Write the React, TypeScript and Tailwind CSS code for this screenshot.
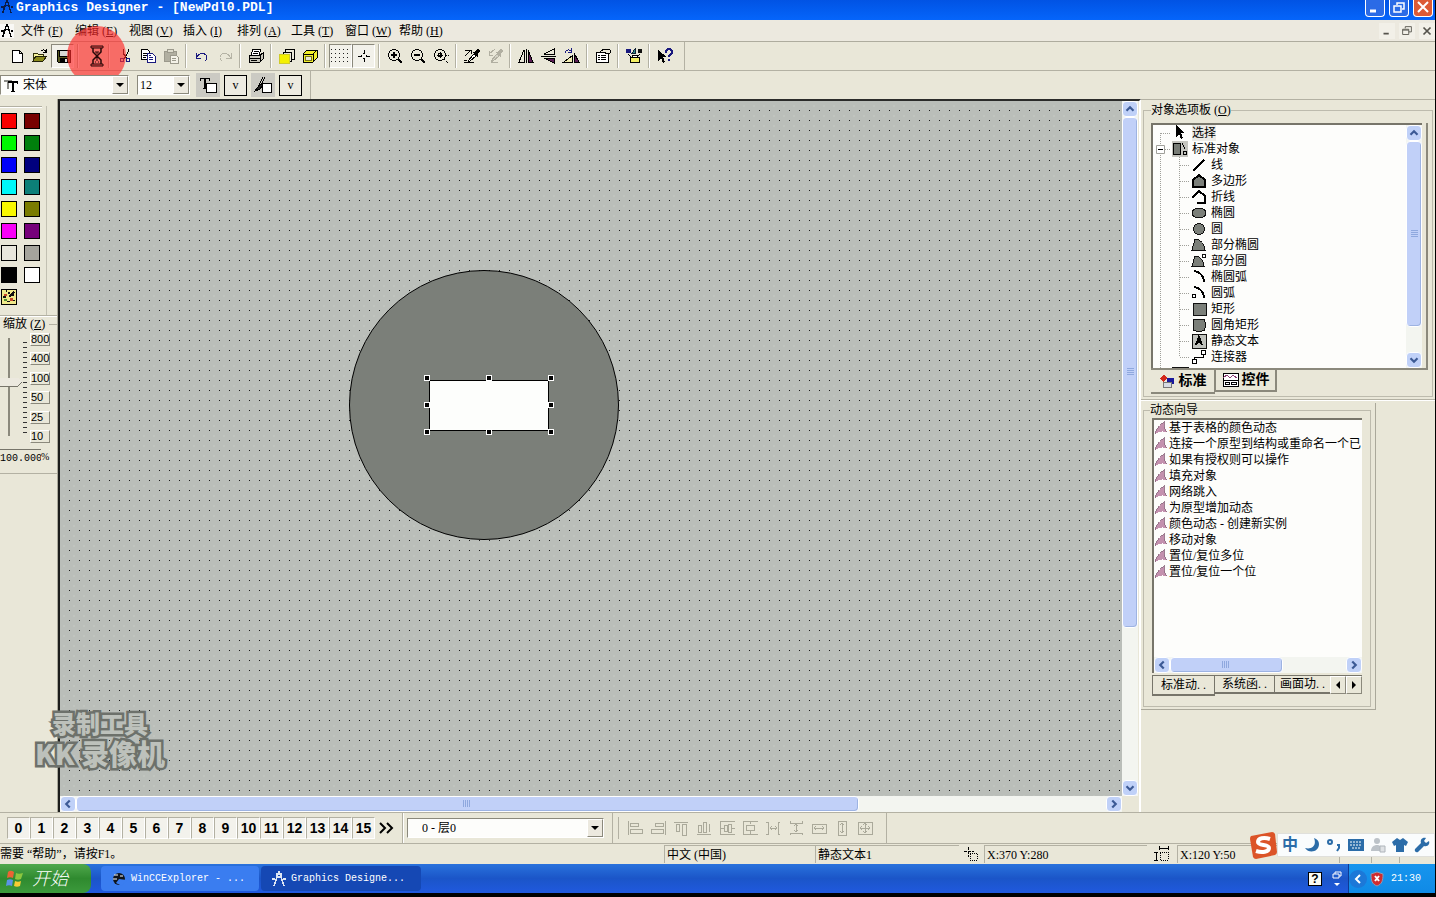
import { useState } from 'react';
import type { ReactNode } from 'react';
import clsx from 'clsx';

const SUNKEN = 'border border-t-[#8b897c] border-l-[#8b897c] border-b-white border-r-white';
const RAISED = 'border border-t-white border-l-white border-b-[#8b897c] border-r-[#8b897c]';

const ICONS: Record<string, ReactNode> = {
  new: <path d="M3 2h7l3 3v9H3zM10 2v3h3" fill="#fff" stroke="#000" />,
  open: (
    <>
      <path d="M1 13V5h4l1 1h5v2" fill="#f4f29a" stroke="#33320c" />
      <path d="M1 13l3-5h11l-4 5z" fill="#8a8a1c" stroke="#22220a" />
      <path d="M9 3c2-2 4-1 5 1M14 1v3h-3" fill="none" stroke="#000" />
    </>
  ),
  save: (
    <>
      <path d="M2 2h13v12H3l-1-1z" fill="#55571f" stroke="#000" />
      <path d="M4 2h9v6H4z" fill="#d9d9d5" stroke="#000" />
      <path d="M5 10h8v4H5z" fill="#000" />
      <path d="M10 11h2v3h-2z" fill="#ddd" />
    </>
  ),
  hourglass: (
    <>
      <path d="M2 1h12v2H2zM2 19h12v2H2z" fill="#e84848" stroke="#260808" />
      <path d="M4 3v4l4 4-4 4v4M12 3v4l-4 4 4 4v4" fill="none" stroke="#260808" strokeWidth="1.500" />
      <path d="M6 7h4M7 8h2M8 12v3M6 17h1M9 17h1M8 15v1" fill="none" stroke="#260808" />
    </>
  ),
  cut: (
    <>
      <path d="M6 1v4l4 6M11 1v3L7 11" fill="none" stroke="#000" />
      <circle cx="5" cy="12" r="2" fill="none" stroke="#19197e" />
      <circle cx="11" cy="12" r="2" fill="none" stroke="#19197e" />
    </>
  ),
  copy: (
    <>
      <path d="M1 1h6l2 2v8H1z" fill="#fff" stroke="#000" />
      <path d="M3 5h4M3 7h4M3 9h3" stroke="#000" />
      <path d="M7 5h5l3 3v6H7z" fill="#fff" stroke="#19197e" />
      <path d="M9 9h4M9 11h4M9 7h2" stroke="#19197e" />
    </>
  ),
  paste: (
    <>
      <path d="M1 3h12v10H1z" fill="#b1afa1" stroke="#9b998c" />
      <path d="M4 1h6v3H4z" fill="#dddbcd" stroke="#9b998c" />
      <path d="M7 7h6l2 2v6H7z" fill="#f4f2e8" stroke="#9b998c" />
      <path d="M9 10h4M9 12h4" stroke="#9b998c" />
    </>
  ),
  undo: <path d="M2 5v5h5M2 10c3-5 7-6 10-3 2 2 1 5-1 6" fill="none" stroke="#19197e" />,
  redo: <path d="M14 5v5H9M14 10C11 5 7 4 4 7c-2 2-1 5 1 6" fill="none" stroke="#b5b3a5" />,
  print: (
    <>
      <path d="M5 1h8l-2 6H3z" fill="#fff" stroke="#000" />
      <path d="M6 3h5M5 5h5" stroke="#000" />
      <path d="M1 7h11l3-2v6l-3 3H1z" fill="#c9c8bc" stroke="#000" />
      <path d="M1 10h11M12 7v7M3 12h6" stroke="#000" />
    </>
  ),
  layers: (
    <>
      <path d="M6 1h9v10h-3V4H6z" fill="#e9e7d8" stroke="#000" />
      <path d="M4 4h8v9h-2V6H4z" fill="#e9e7d8" stroke="#000" />
      <path d="M0 6h10v9H0z" fill="#f4f000" stroke="#cfcb2a" />
    </>
  ),
  cube: (
    <>
      <path d="M1 6l4-4h10v8l-4 4H1z" fill="#f1ee2b" stroke="#000" />
      <path d="M1 6h10v8M11 6l4-4" fill="none" stroke="#000" />
      <path d="M3 8h6v4H3z" fill="#e8e6d8" stroke="#77761a" />
    </>
  ),
  grid: (
    <path d="M-2 1h19M-2 5h19M-2 9h19M-2 13h19" fill="none" stroke="#222" strokeDasharray="1 3" />
  ),
  snap: (
    <path
      d="M8 2v4M8 10v4M2 8h4M10 8h4M7 5l1 1 1-1M7 11l1-1 1 1M5 7l1 1-1 1M11 7l-1 1 1 1"
      fill="none"
      stroke="#000"
    />
  ),
  zoomIn: (
    <>
      <circle cx="7" cy="7" r="5.500" fill="none" stroke="#000" />
      <path d="M4 7h6M7 4v6" stroke="#000" strokeWidth="2" />
      <path d="M11 11l4 4" stroke="#000" strokeWidth="2" />
    </>
  ),
  zoomOut: (
    <>
      <circle cx="7" cy="7" r="5.500" fill="none" stroke="#000" />
      <path d="M4 7h6" stroke="#000" strokeWidth="2" />
      <path d="M11 11l4 4" stroke="#000" strokeWidth="2" />
    </>
  ),
  zoomArea: (
    <>
      <circle cx="7" cy="7" r="5.500" fill="none" stroke="#000" />
      <path d="M4 7h6M7 4v6" stroke="#000" />
      <circle cx="7" cy="7" r="2" fill="none" stroke="#000" />
      <path d="M11 11l4 4M12 7h4" stroke="#000" strokeDasharray="2 1" />
    </>
  ),
  picker: (
    <>
      <path d="M4 13l6-7 2 2-7 6z" fill="#fff" stroke="#000" />
      <path d="M9 4l2 0 3-3 2 2-3 3v2z" fill="#000" stroke="#000" />
      <path d="M1 2h6v4M1 8l6-6M0 14h10M0 12h3" stroke="#000" fill="none" />
    </>
  ),
  pickerOff: (
    <>
      <path d="M4 13l6-7 2 2-7 6z" fill="#d5d3c6" stroke="#b1afa1" />
      <path d="M9 4l2 0 3-3 2 2-3 3v2z" fill="#b1afa1" stroke="#b1afa1" />
      <path d="M8 1L2 6M2 3v4h4M4 14h7M4 12h3" stroke="#b1afa1" fill="none" />
    </>
  ),
  mirrorH: (
    <>
      <path d="M6 2v12H1z" fill="#e9e7d8" stroke="#000" />
      <path d="M8 1v14" stroke="#000" />
      <path d="M10 2v12h5z" fill="#5b1d55" stroke="#000" />
    </>
  ),
  mirrorV: (
    <>
      <path d="M13 1v5H3z" fill="#e9e7d8" stroke="#000" />
      <path d="M0 8h15" stroke="#000" />
      <path d="M13 15v-5H3z" fill="#5b1d55" stroke="#000" />
    </>
  ),
  rotate: (
    <>
      <path d="M8 8v6H0z" fill="#f1ecb0" stroke="#000" />
      <path d="M10 5v9h5z" fill="#5b1d55" stroke="#000" />
      <path d="M1 5c1-3 4-4 6-2M7 0v4H4" fill="none" stroke="#19197e" />
    </>
  ),
  props: (
    <>
      <path d="M1 4h12v10H1z" fill="#fff" stroke="#000" />
      <path d="M3 7h2M6 7h5M3 9h2M6 9h5M3 11h2M6 11h5" stroke="#000" />
      <path d="M5 4l4-3 6 1v3l-3 1-3-2" fill="#e9e7d8" stroke="#000" />
    </>
  ),
  library: (
    <>
      <circle cx="2.500" cy="3" r="2.500" fill="#19197e" />
      <path d="M9 1v4H6z" fill="#2f8d8d" stroke="#123" />
      <path d="M12 1h4v4h-4z" fill="#111" />
      <path d="M2 6l3 3M14 6l-3 3" stroke="#000" />
      <path d="M4 9h9v5H4z" fill="#f4f064" stroke="#000" />
      <path d="M6 7h5v2H6z" fill="#fff" stroke="#000" />
    </>
  ),
  help: (
    <>
      <path d="M1 2v11l3-3 2 5 2-1-2-5h4z" fill="#000" />
      <path d="M9 5c0-5 6-5 6-1 0 3-3 2-3 5M12 11v2" fill="none" stroke="#19197e" strokeWidth="2" />
    </>
  ),
  compass: (
    <path
      d="M8 0v3M6 3h4v3H6zM6 6L3 15M10 6l3 9M1 8h3M12 8h3"
      fill="none"
      stroke="currentColor"
      strokeWidth="1.500"
    />
  ),
  textColor: (
    <>
      <path d="M0 1h10v3H9V2H6v9h1v1H3v-1h1V2H1v2H0z" fill="#000" />
      <path d="M6 6h10v9H6z" fill="#fff" stroke="#000" />
    </>
  ),
  brush: (
    <>
      <path d="M8 0L4 8M10 0L6 8M5 7l-5 7 5-2 3-4z" fill="#222" stroke="#000" />
      <path d="M7 6h9v9H7z" fill="#fff" stroke="#000" />
    </>
  ),
  cursor: <path d="M4 0v12l3-3 2 5 2-1-2-5h4z" fill="#000" />,
  objects: (
    <>
      <path d="M0 0h16v16H0z" fill="#c4c4be" />
      <path d="M1 2h7v11H1z" fill="#777b75" stroke="#000" />
      <path d="M10 2l3 6" stroke="#000" />
      <circle cx="13" cy="12" r="2" fill="none" stroke="#000" />
    </>
  ),
  line: <path d="M2 14L13 3" stroke="#000" strokeWidth="2" />,
  polygon: <path d="M2 7l6-5 6 5v7H2z" fill="#7b7f79" stroke="#000" strokeWidth="2" />,
  polyline: <path d="M1 9l7-7 6 5v7H6" fill="none" stroke="#000" strokeWidth="2" />,
  ellipse: <ellipse cx="8" cy="8" rx="7" ry="5" fill="#7b7f79" stroke="#111" />,
  circle: <circle cx="8" cy="8" r="5.500" fill="#7b7f79" stroke="#111" />,
  ellipseSegment: <path d="M1 13L4 2c5 0 9 4 10 11z" fill="#7b7f79" stroke="#111" />,
  circleSegment: (
    <>
      <path d="M1 13L4 3c5 0 8 4 9 10z" fill="#7b7f79" stroke="#111" />
      <circle cx="13" cy="3" r="2" fill="#fff" stroke="#111" />
    </>
  ),
  ellipseArc: <path d="M3 2c6 1 10 5 10 11" fill="none" stroke="#000" strokeWidth="2" />,
  circleArc: (
    <>
      <path d="M3 2c6 1 10 5 10 11" fill="none" stroke="#000" strokeWidth="2" />
      <circle cx="3" cy="11" r="2" fill="#fff" stroke="#000" />
    </>
  ),
  rect: <path d="M2 2h13v12H2z" fill="#7b7f79" stroke="#111" />,
  roundRect: <rect x="2" y="2" width="12" height="12" rx="3" fill="#7b7f79" stroke="#111" />,
  staticText: (
    <>
      <path d="M1 1h14v14H1z" fill="#c0c2bd" stroke="#111" />
      <path d="M5 12l3-8 3 8M6 9h4" fill="none" stroke="#000" strokeWidth="2" />
    </>
  ),
  connector: (
    <>
      <path d="M3 10V8h9V5" fill="none" stroke="#000" />
      <path d="M10 1h4v4h-4zM1 10h4v4H1z" fill="#fff" stroke="#000" />
    </>
  ),
  smartObject: <path d="M0 2h16v12H0z" fill="#c4c4be" stroke="#111" />,
  wizard: (
    <>
      <path d="M1 15C2 9 7 4 12 1c-1 5 0 8 3 12-5-2-10-1-14 2z" fill="#c391ae" />
      <path d="M12 1c-1 5 0 8 3 12M1 15C2 9 7 4 12 1" fill="none" stroke="#8d6a80" />
    </>
  ),
  tabStandard: (
    <>
      <path d="M1 5l4-3 3 3-4 4z" fill="#d22a1c" />
      <path d="M8 5h7v6H8z" fill="#19199c" />
      <path d="M4 9h8v5H4z" fill="#d7dbe4" stroke="#777" />
    </>
  ),
  tabControls: (
    <>
      <path d="M1 1h15v13H1zM1 8h15" fill="#fff" stroke="#000" />
      <path d="M1 6l4-3 3 3 3-3 4 3" fill="none" stroke="#8a3a72" />
      <path d="M3 10h4v2H3zM9 10h5v2H9z" fill="none" stroke="#000" />
    </>
  ),
  palette: (
    <>
      <path d="M0 0h16v16H0z" fill="#efe98a" />
      <path d="M2 4h4v3H2zM9 9h3v4H9z" fill="#c4452b" />
      <path d="M2 10h4v3H2z" fill="#4f8d30" />
      <path d="M8 8l6-6M7 3h2M11 6h3M6 13h3M1 8h3M4 1h2M13 12h2" stroke="#111" strokeWidth="2" />
    </>
  ),
  position: (
    <>
      <path d="M4 1v10M0 5h10" stroke="#000" strokeDasharray="3 1" fill="none" />
      <path d="M6 7h7v7H6z" fill="none" stroke="#000" strokeDasharray="1 1" />
    </>
  ),
  extent: (
    <>
      <path d="M5 2h9M2 6v8M5 0v4M14 0v4M0 6h4M0 14h4" stroke="#000" fill="none" />
      <path d="M6 6h8v8H6z" fill="none" stroke="#000" strokeDasharray="1 1" />
    </>
  ),
  alignLeft: <path d="M1 1v14M3 3h8v3H3zM3 9h12v4H3z" />,
  alignRight: <path d="M15 1v14M13 3H5v3h8zM13 9H1v4h12z" />,
  alignTop: <path d="M1 2h14M3 4h3v7H3zM9 4h4v11H9z" />,
  alignBottom: <path d="M1 14h14M2 5h3v7H2zM7 2h3v10H7zM13 4v8" />,
  centerH: <path d="M1 1h15v13H1zM1 8h4M12 8h4M5 5h3v6H5zM9 4h3v8H9z" />,
  centerV: <path d="M1 1h15v13H1zM8 1v3M8 11v3M4 5h8v5H4z" />,
  spaceH: <path d="M1 2h2v12H1M15 2h-2v12h2M5 8h7M7 6L5 8l2 2M10 6l2 2-2 2" />,
  spaceV: <path d="M2 1v2h12V1M2 15v-2h12v2M8 4v8M6 6l2-2 2 2M6 10l2 2 2-2" />,
  sameWidth: <path d="M1 4h14v9H1zM3 8h10M5 6L3 8l2 2M11 6l2 2-2 2" />,
  sameHeight: <path d="M4 1h8v14H4zM8 3v10M6 5l2-2 2 2M6 11l2 2 2-2" />,
  sameSize: <path d="M1 2h14v12H1zM3 8h10M8 3v10M5 6L3 8l2 2M11 6l2 2-2 2M6 5l2-2 2 2M6 11l2 2 2-2" />,
};

const Icon = ({ name, className = 'size-4' }: { name: string; className?: string }) => (
  <svg
    viewBox="0 0 16 16"
    shapeRendering="crispEdges"
    className={clsx('shrink-0 overflow-visible', className)}
    aria-hidden="true"
  >
    {ICONS[name]}
  </svg>
);

const Chevron = ({ dir }: { dir: 'up' | 'down' | 'left' | 'right' }) => {
  const paths = {
    up: 'M4 10l4-4 4 4',
    down: 'M4 6l4 4 4-4',
    left: 'M10 4L6 8l4 4',
    right: 'M6 4l4 4-4 4',
  };
  return (
    <svg viewBox="0 0 16 16" className="size-4" aria-hidden="true">
      <path d={paths[dir]} fill="none" stroke="#3c5a95" strokeWidth="2.500" />
    </svg>
  );
};

const SCROLL_BUTTON =
  'flex size-4 shrink-0 items-center justify-center rounded-sm border border-white bg-[#c0d1f8]';

const ScrollBar = ({ vertical = false, size }: { vertical?: boolean; size: number }) => (
  <div className={clsx('flex shrink-0 bg-[#f3f5f0]', vertical ? 'w-4 flex-col' : 'h-4 w-full')}>
    <button className={SCROLL_BUTTON} aria-label={vertical ? '向上滚动' : '向左滚动'}>
      <Chevron dir={vertical ? 'up' : 'left'} />
    </button>
    <div className="min-h-0 min-w-0 flex-1">
      <div
        className={clsx(
          'flex items-center justify-center rounded-sm border border-white bg-[#c1d0f8] shadow-[inset_-1px_-1px_0_#9db3e2]',
          vertical ? 'w-full' : 'h-full',
        )}
        style={vertical ? { height: `${size}%` } : { width: `${size}%` }}
      >
        <svg
          viewBox="0 0 8 8"
          shapeRendering="crispEdges"
          className={clsx('size-2', vertical && 'rotate-90')}
          aria-hidden="true"
        >
          <path d="M0.500 0v7M2.500 0v7M4.500 0v7M6.500 0v7" stroke="#8fa8de" />
        </svg>
      </div>
    </div>
    <button className={SCROLL_BUTTON} aria-label={vertical ? '向下滚动' : '向右滚动'}>
      <Chevron dir={vertical ? 'down' : 'right'} />
    </button>
  </div>
);

const Separator = () => (
  <div className="flex h-full w-2 shrink-0 justify-center">
    <div className="h-full w-0.5 border-l border-[#b3b1a3] bg-white" />
  </div>
);

const TitleBar = () => (
  <header className="flex h-5 shrink-0 items-start bg-linear-to-b from-[#0153e4] to-[#0565fb] text-white">
    <Icon name="compass" className="size-3.5 text-[#0a1c48]" />
    <h1 className="ml-0.5 flex-1 font-[Liberation_Mono,monospace] text-[13px] leading-[15px] font-bold">
      Graphics Designer - [NewPdl0.PDL]
    </h1>
    <div className="flex gap-1 pr-0.5">
      {['最小化', '还原', '关闭'].map((label, i) => (
        <button
          key={label}
          aria-label={label}
          className={clsx(
            'flex h-[17px] w-5 items-center justify-center rounded-b-sm border border-t-0 border-white',
            i === 2 ? 'bg-[#dc5a36]' : 'bg-[#2b6be6]',
          )}
        >
          <svg viewBox="0 0 16 16" className="size-4" fill="none" stroke="#fff" strokeWidth="2" aria-hidden="true">
            {i === 0 && <path d="M3 11h6" strokeWidth="3" />}
            {i === 1 && <path d="M6 5V3h7v6h-2M3 6h7v6H3z" strokeWidth="1.500" />}
            {i === 2 && <path d="M3 2l10 10M13 2L3 12" />}
          </svg>
        </button>
      ))}
    </div>
  </header>
);

const MENUS = [
  ['文件', 'F'],
  ['编辑', 'E'],
  ['视图', 'V'],
  ['插入', 'I'],
  ['排列', 'A'],
  ['工具', 'T'],
  ['窗口', 'W'],
  ['帮助', 'H'],
];

const MenuBar = () => (
  <nav className="flex h-[22px] shrink-0 items-center border-b border-[#aeac9e] bg-[#ece9df]">
    <div className="flex w-[21px] items-center">
      <Icon name="compass" className="size-3.5 bg-[#f9f8f5] text-black" />
    </div>
    {MENUS.map(([label, key]) => (
      <button key={key} className="w-[54px] text-left whitespace-nowrap">
        {label} (<u>{key}</u>)
      </button>
    ))}
    <div className="ml-auto flex gap-1">
      {['M4 11h6', 'M6 5V3h7v6h-3M3 6h7v6H3zM3 7h7', 'M4 4l8 8M12 4l-8 8'].map((d, i) => (
        <button
          key={d}
          aria-label={['最小化文档', '还原文档', '关闭文档'][i]}
          className="flex size-4 items-center justify-center bg-[#f2f0e8]"
        >
          <svg viewBox="0 0 16 16" className="size-3.5" fill="none" stroke="#55534c" aria-hidden="true">
            <path d={d} strokeWidth={i === 1 ? 1 : 2} />
          </svg>
        </button>
      ))}
    </div>
  </nav>
);

const TOOLS = [
  ['new', 'open', 'save'],
  ['hourglass'],
  ['cut', 'copy', 'paste'],
  ['undo', 'redo'],
  ['print'],
  ['layers', 'cube'],
  ['grid', 'snap'],
  ['zoomIn', 'zoomOut', 'zoomArea'],
  ['picker', 'pickerOff'],
  ['mirrorH', 'mirrorV', 'rotate'],
  ['props'],
  ['library'],
  ['help'],
];
const PRESSED = ['save', 'grid', 'snap'];

const Toolbar = () => (
  <div className="relative flex h-[29px] shrink-0 border-b border-[#b3b1a3]">
    <div className="flex border-r border-[#b3b1a3] py-0.5 pr-2 pl-[5px]">
      {TOOLS.map((group, i) => (
        <div key={group[0]} className="flex items-center">
          {i > 0 && <Separator />}
          {group.map((name) => (
            <button
              key={name}
              aria-label={name}
              className={clsx(
                'flex h-6 w-[23px] items-center justify-center',
                PRESSED.includes(name) && ['bg-[#f2f1ea]', SUNKEN],
              )}
            >
              {name !== 'hourglass' && <Icon name={name} />}
            </button>
          ))}
        </div>
      ))}
    </div>
    {/* click highlight over the busy cursor */}
    <div className="pointer-events-none absolute -top-4 left-[67px] flex size-[59px] items-center justify-center rounded-full bg-[#ff2a2a]/65">
      <svg viewBox="0 0 16 22" className="h-[22px] w-4" aria-hidden="true">
        {ICONS.hourglass}
      </svg>
    </div>
  </div>
);

const Combo = ({
  label,
  value,
  options,
  className,
  selectClass,
}: {
  label: string;
  value: string;
  options: string[];
  className: string;
  selectClass?: string;
}) => {
  const [current, setCurrent] = useState(value);
  return (
    <div className={clsx('relative flex items-center bg-[#fdfdfb]', SUNKEN, className)}>
      <select
        aria-label={label}
        value={current}
        onChange={(e) => setCurrent(e.target.value)}
        className={clsx('h-full w-full appearance-none bg-transparent outline-none', selectClass)}
      >
        {options.map((o) => (
          <option key={o}>{o}</option>
        ))}
      </select>
      <span
        className={clsx(
          'pointer-events-none absolute right-0 flex h-full w-4 items-center justify-center bg-[#ece9df]',
          RAISED,
        )}
      >
        <svg viewBox="0 0 8 4" className="h-1 w-2" aria-hidden="true">
          <path d="M0 0h8L4 4z" />
        </svg>
      </span>
    </div>
  );
};

const FormatBar = () => (
  <div className="flex h-7 shrink-0">
    <div className="flex items-center border-r border-[#b3b1a3] pr-2">
      <div className="relative">
        <Combo label="字体" value="宋体" options={['宋体', '黑体']} className="h-5 w-[129px]" selectClass="pl-[22px]" />
        <svg viewBox="0 0 16 16" className="absolute top-0.5 left-1 size-4" aria-hidden="true">
          <path d="M0 3h8v2H5v7H3V5H0z" fill="#8b8b86" />
          <path d="M4 6V4h10v3h-1V6h-3v8h1v1H7v-1h1V6H5z" />
        </svg>
      </div>
      <Combo label="字号" value="12" options={['10', '12', '14']} className="ml-2 h-5 w-[53px]" selectClass="pl-0.5" />
      <div className="ml-1.5 flex items-center gap-1">
        {['textColor', 'brush'].map((name) => (
          <div key={name} className="flex items-center gap-1">
            <button aria-label={name} className="flex size-6 items-center justify-center bg-[#cbcac3]">
              <Icon name={name} />
            </button>
            <button className="h-[21px] w-[23px] border border-black bg-[#edebe1] text-xs leading-4">v</button>
          </div>
        ))}
      </div>
    </div>
  </div>
);

const SWATCHES = [
  '#f80000', '#780000', '#00f800', '#007f0c', '#0000f8', '#00007e', '#00f8f8', '#0c7f78',
  '#f8f800', '#7a7c00', '#f800f8', '#76007a', '#e8e6dc', '#a5a49c', '#000000', '#ffffff',
];

const SidePanel = () => (
  <aside className="flex w-[58px] shrink-0 flex-col overflow-hidden border-r border-[#aaa89a]">
    <div className="mt-[7px] mr-2.5 h-[209px] border-r border-[#c2c0b2]">
      <div className="mr-1 h-0.5 border-t border-[#b3b1a3] bg-white" />
      <div className="mt-[5px] ml-px grid w-10 grid-cols-[16px_16px] gap-x-[7px] gap-y-1.5">
        {SWATCHES.map((color) => (
          <button
            key={color}
            aria-label={color}
            className="size-4 border border-black"
            style={{ backgroundColor: color }}
          />
        ))}
        <button aria-label="调色板" className="size-4 border border-black">
          <Icon name="palette" className="size-3.5" />
        </button>
      </div>
    </div>
    <div className="h-0.5 border-t border-[#b3b1a3] bg-white" />
    <section className="border-b border-[#b3b1a3]">
      <div className="flex h-3.5 items-center pl-[3px] whitespace-nowrap">
        <label htmlFor="zoom">
          缩放 (<u>Z</u>)
        </label>
        <span className="ml-1 h-px flex-1 bg-[#b3b1a3]" />
      </div>
      <div className="flex h-[112px]">
        <div className="relative h-full w-[30px]">
          <svg viewBox="0 0 30 112" shapeRendering="crispEdges" className="h-full w-full" aria-hidden="true">
            <path d="M9 7v98" stroke="#8b897c" strokeWidth="2" />
            <path d="M0 47h18l4 4-4 4H0z" fill="#ece9df" />
            <path d="M0 55h18l4-4" fill="none" stroke="#77756a" />
            <path d="M25 11v92" stroke="#333" strokeWidth="4" strokeDasharray="1 4" />
          </svg>
          <input
            id="zoom"
            type="range"
            min={10}
            max={800}
            defaultValue={100}
            className="absolute inset-0 h-full w-full opacity-0"
          />
        </div>
        <div className="flex flex-col justify-between pt-0.5">
          {[800, 400, 100, 50, 25, 10].map((n) => (
            <button
              key={n}
              className={clsx('h-[13px] w-5 text-left font-[Liberation_Sans,sans-serif] text-[11px] leading-[11px]', RAISED)}
            >
              {n}
            </button>
          ))}
        </div>
      </div>
      <div className="mt-1.5 flex h-6 items-start">
        <input
          aria-label="缩放比例"
          defaultValue="100.000"
          className="h-[18px] w-[41px] border-t border-[#77756a] bg-transparent font-[Liberation_Mono,monospace] text-[10px] outline-none"
        />
        <span className="text-[10px] leading-4">%</span>
      </div>
    </section>
  </aside>
);

const HANDLES = [
  [367, 277], [429, 277], [491, 277], [367, 304],
  [491, 304], [367, 331], [429, 331], [491, 331],
];

const Canvas = () => (
  <main className="flex min-w-0 flex-1 border-t-2 border-r-2 border-l-2 border-t-[#2b2c2a] border-r-white border-l-[#1c1d1c]">
    <div className="flex min-w-0 flex-1 flex-col">
      <div className="min-h-0 flex-1 overflow-hidden bg-[#babeb9]">
        <svg className="block h-full w-full" role="img" aria-label="NewPdl0.PDL">
          <defs>
            <pattern id="dots" width="10" height="10" patternUnits="userSpaceOnUse">
              <rect x="9" y="9" width="1" height="1" fill="#1c1d1c" />
              <rect x="3" y="4" width="2" height="2" fill="#c0c4be" />
            </pattern>
          </defs>
          <rect width="100%" height="100%" fill="url(#dots)" />
          <circle cx="424" cy="304" r="134.500" fill="#7b7f79" stroke="#000" />
          <rect x="369.500" y="279.500" width="119" height="50" fill="#fdfefc" stroke="#000" />
          {HANDLES.map(([x, y]) => (
            <rect key={`${x}-${y}`} x={x - 2.5} y={y - 2.5} width="5" height="5" fill="#000" stroke="#fff" />
          ))}
        </svg>
      </div>
      <ScrollBar size={76} />
    </div>
    <div className="flex w-[17px] flex-col">
      <div className="flex min-h-0 flex-1">
        <ScrollBar vertical size={77} />
      </div>
      <div className="h-4" />
    </div>
  </main>
);

const TREE = [
  ['line', '线'],
  ['polygon', '多边形'],
  ['polyline', '折线'],
  ['ellipse', '椭圆'],
  ['circle', '圆'],
  ['ellipseSegment', '部分椭圆'],
  ['circleSegment', '部分圆'],
  ['ellipseArc', '椭圆弧'],
  ['circleArc', '圆弧'],
  ['rect', '矩形'],
  ['roundRect', '圆角矩形'],
  ['staticText', '静态文本'],
  ['connector', '连接器'],
];

const Branch = ({ d, box = false }: { d: string; box?: boolean }) => (
  <svg viewBox="0 0 19 16" className="h-4 w-[19px] shrink-0" fill="none" aria-hidden="true">
    <path d={d} stroke="#a0a09a" strokeDasharray="1 1" />
    {box && (
      <>
        <path d="M3.500 4.500h8v8h-8z" fill="#fff" stroke="#a0a09a" />
        <path d="M5 8.500h5" stroke="#000" />
      </>
    )}
  </svg>
);

const ObjectPalette = () => (
  <fieldset className="mr-0.5 ml-0.5 min-w-0 border border-[#bdbbad] pr-1 pb-0.5 pl-[7px]">
    <legend className="h-3.5 leading-3.5">
      对象选项板 (<u>O</u>)
    </legend>
    <div className="mt-1.5 border-r-2 border-b-2 border-[#8b897c] pr-1">
      <div className="flex h-[245px] overflow-hidden border-t-2 border-l-2 border-[#77756a] bg-[#fdfdfb]">
        <ul className="min-w-0 flex-1">
          <li className="flex h-4 items-center">
            <Branch d="M7.500 8v8M8 8.500h10" />
            <Icon name="cursor" />
            <span className="ml-1 bg-[#ecebe6]">选择</span>
          </li>
          <li className="flex h-4 items-center">
            <Branch d="M7.500 0v16M8 8.500h10" box />
            <Icon name="objects" />
            <span className="ml-1">标准对象</span>
          </li>
          {TREE.map(([icon, label], i) => (
            <li key={icon} className="flex h-4 items-center">
              <Branch d="M7.500 0v16" />
              <Branch d={i === TREE.length - 1 ? 'M7.500 0v8M8 8.500h10' : 'M7.500 0v16M8 8.500h10'} />
              <Icon name={icon} />
              <span className="ml-1">{label}</span>
            </li>
          ))}
          <li className="flex h-4 items-center">
            <Branch d="M7.500 0v8" />
            <Icon name="smartObject" />
          </li>
        </ul>
        <ScrollBar vertical size={88} />
      </div>
    </div>
    <div role="tablist" className="flex items-start text-sm leading-4 font-bold">
      <button role="tab" aria-selected="true" className="flex h-6 w-16 items-center justify-center gap-1 border-r border-b-2 border-[#8b897c]">
        <Icon name="tabStandard" />
        标准
      </button>
      <button role="tab" aria-selected="false" className="flex h-[22px] w-[62px] items-center justify-center gap-1 border-r-2 border-b-2 border-l border-[#8b897c]">
        <Icon name="tabControls" />
        控件
      </button>
    </div>
  </fieldset>
);

const WIZARDS = [
  '基于表格的颜色动态',
  '连接一个原型到结构或重命名一个已',
  '如果有授权则可以操作',
  '填充对象',
  '网络跳入',
  '为原型增加动态',
  '颜色动态 - 创建新实例',
  '移动对象',
  '置位/复位多位',
  '置位/复位一个位',
];

const DynamicWizard = () => (
  <div className="w-[235px] border-r border-b border-[#aaa89a] pb-0.5">
    <fieldset className="mr-1 ml-0.5 min-w-0 border border-[#bdbbad] px-2 pb-2.5">
      <legend className="-ml-0.5 h-3.5 leading-3.5">动态向导</legend>
      <div className="mt-px border-t-2 border-l-2 border-[#77756a] bg-[#fdfdfb]">
        <ul className="h-[237px]">
          {WIZARDS.map((label) => (
            <li key={label} className="flex h-4 items-center overflow-hidden whitespace-nowrap">
              <Icon name="wizard" className="size-3.5" />
              <span className="ml-px leading-4">{label}</span>
            </li>
          ))}
        </ul>
        <ScrollBar size={64} />
      </div>
      <div role="tablist" className="mt-0.5 flex items-start border-t border-l border-[#77756a] text-xs leading-4">
        {['标准动. .', '系统函. .', '画面功. .'].map((label, i) => (
          <button
            key={label}
            role="tab"
            aria-selected={i === 0}
            className={clsx(
              'overflow-hidden border-b-2 border-[#77756a] whitespace-nowrap',
              i === 0 && 'h-5 w-[62px] border-r',
              i === 1 && 'h-[18px] w-[60px] border-r',
              i === 2 && 'h-[18px] min-w-0 flex-1',
            )}
          >
            {label}
          </button>
        ))}
        {['M6 0v8L2 4z', 'M2 0v8l4-4z'].map((d, i) => (
          <button
            key={d}
            aria-label={i ? '下一个标签' : '上一个标签'}
            className={clsx('flex h-[18px] w-4 items-center justify-center', RAISED)}
          >
            <svg viewBox="0 0 8 8" className="size-2" aria-hidden="true">
              <path d={d} />
            </svg>
          </button>
        ))}
      </div>
    </fieldset>
  </div>
);

const ALIGN_TOOLS = [
  'alignLeft', 'alignRight', 'alignTop', 'alignBottom', 'centerH', 'centerV',
  'spaceH', 'spaceV', 'sameWidth', 'sameHeight', 'sameSize',
];

const LayerBar = () => (
  <div className="flex h-[31px] shrink-0 items-center border-b border-[#b3b1a3] pl-[7px]">
    <div className="flex font-[Liberation_Sans,sans-serif] text-sm font-bold">
      {Array.from({ length: 16 }, (_, i) => (
        <button
          key={i}
          className="h-[22px] w-[23px] border border-t-[#b3b1a3] border-r-white border-b-white border-l-[#b3b1a3] bg-[#f3f2ec]"
        >
          {i}
        </button>
      ))}
      <button aria-label="更多图层" className="flex h-[22px] w-6 items-center justify-center">
        <svg viewBox="0 0 16 16" className="size-4" fill="none" stroke="#000" strokeWidth="2" aria-hidden="true">
          <path d="M1 3l5 5-5 5M8 3l5 5-5 5" />
        </svg>
      </button>
    </div>
    <Separator />
    <Combo label="图层" value="0 - 层0" options={['0 - 层0', '1 - 层1']} className="h-5 w-[197px]" selectClass="pl-3.5" />
    <div className="ml-2 flex h-full items-center border-r border-l border-[#b3b1a3] pr-2.5">
      <div className="mr-1 ml-1">
        <div className="h-[22px] w-0.5 border-r border-[#b3b1a3]" />
      </div>
      {ALIGN_TOOLS.map((name) => (
        <button key={name} aria-label={name} disabled className="flex size-[23px] items-center justify-center">
          <svg
            viewBox="0 0 16 16"
            shapeRendering="crispEdges"
            className="size-4"
            fill="none"
            stroke="#aaa99a"
            aria-hidden="true"
          >
            {ICONS[name]}
          </svg>
        </button>
      ))}
    </div>
  </div>
);

const STATUS_CELL = 'h-[18px] border-t border-l border-[#b3b1a3] pl-0.5 leading-[18px] whitespace-nowrap';

const ImeBar = () => (
  <div className="absolute right-0 bottom-1.5 flex h-[26px] items-center">
    <svg viewBox="0 0 28 28" className="size-7" aria-hidden="true">
      <path d="M2 5L23 1q2 0 3 2l2 18q0 2-2 3L7 28q-2 0-3-2L1 8q0-2 1-3z" fill="#dc5428" />
      <path d="M21 8c-6-2-12-1-12 3s11 2 11 6-7 5-13 3" fill="none" stroke="#fff" strokeWidth="4" />
    </svg>
    <div className="flex h-6 items-center gap-1.5 border border-[#e0e0dc] bg-[#fafcfd] pr-1 pl-1 text-[#2b6ca8]">
      <button className="text-base leading-5 font-bold">中</button>
      {[
        <path key="m" d="M10 1c3 7-2 12-9 10 4 6 14 4 14-4 0-3-2-5-5-6z" fill="currentColor" />,
        <g key="p" fill="none" stroke="currentColor" strokeWidth="2">
          <circle cx="4" cy="5" r="2" />
          <path d="M11 8h2v3l-2 3" />
        </g>,
        <g key="k">
          <path d="M0 2h16v12H0z" fill="currentColor" />
          <path d="M2 5h12M2 8h12M4 11h8" stroke="#fff" strokeDasharray="2 1" />
        </g>,
        <g key="u" fill="#bcc2c8">
          <circle cx="7" cy="4" r="3" />
          <path d="M1 14c0-8 12-8 12 0z" />
          <path d="M10 9h5v6h-5z" fill="#dfe2e5" stroke="#aeb4ba" />
        </g>,
        <path key="t" d="M5 1l3 2 3-2 5 4-2 4-2-1v7H4V8L2 9 0 5z" fill="currentColor" />,
        <path key="w" d="M15 4l-3 2-2-2 2-3c-4-1-6 2-5 5L1 12c-1 2 1 4 3 3l6-6c4 1 6-2 5-5z" fill="currentColor" />,
      ].map((shape, i) => (
        <button key={i} aria-label={['月亮', '标点', '软键盘', '用户', '皮肤', '设置'][i]}>
          <svg viewBox="0 0 16 16" className="size-4">
            {shape}
          </svg>
        </button>
      ))}
    </div>
  </div>
);

const StatusBar = () => (
  <div className="relative flex h-5 shrink-0 items-center bg-[#e9e7d8]">
    <span className="flex-1 overflow-hidden whitespace-nowrap">需要 “帮助”，请按F1。</span>
    <div className={clsx('w-[151px]', STATUS_CELL)}>中文 (中国)</div>
    <div className={clsx('w-[144px]', STATUS_CELL)}>静态文本1</div>
    <div className="flex w-[25px] justify-center">
      <Icon name="position" />
    </div>
    <div className={clsx('w-[163px]', STATUS_CELL)}>X:370 Y:280</div>
    <div className="flex w-[30px] justify-center">
      <Icon name="extent" />
    </div>
    <div className={clsx('w-[162px]', STATUS_CELL)}>X:120 Y:50</div>
    <div className={clsx('w-8', STATUS_CELL)} />
    <div className={clsx('w-7', STATUS_CELL)} />
    <div className={clsx('w-9', STATUS_CELL)} />
    <ImeBar />
  </div>
);

const Taskbar = () => (
  <footer className="flex h-[29px] shrink-0 items-stretch bg-linear-to-b from-[#2a72dc] via-[#1b55c8] to-[#2059df] text-white">
    <button className="flex w-[91px] items-center rounded-r-lg bg-linear-to-b from-[#4fa84c] via-[#2f8a2f] to-[#3c9a3c] pl-1.5">
      <svg viewBox="0 0 18 18" className="size-[18px]" aria-hidden="true">
        <path d="M2 2c2-2 4-1 6 0L7 8C5 7 3 7 1 8z" fill="#ec6334" />
        <path d="M10 3c2 1 4 1 7 0l-2 6c-2 1-4 1-6 0z" fill="#8cc63f" />
        <path d="M1 10c2-1 4-1 6 0l-1 6c-2-1-4-1-6 0z" fill="#5b93e8" />
        <path d="M9 11c2 1 4 1 6 0l-1 5c-2 1-4 1-6 0z" fill="#f8cc33" />
      </svg>
      <span className="ml-2 text-lg leading-6 font-light italic">开始</span>
    </button>
    <div className="ml-2.5 flex gap-0.5 font-[Liberation_Mono,monospace] text-[10px]">
      <button className="my-0.5 flex w-[158px] items-center gap-1 rounded-sm bg-[#3a7df0] pl-2.5">
        <svg viewBox="0 0 16 16" className="size-4" aria-hidden="true">
          <circle cx="8" cy="8" r="6" fill="#10151c" />
          <path d="M8 8l8 1-5 6-6-3z" fill="#3a7df0" />
          <path d="M3 4h4M9 5h3M2 8h4" stroke="#fff" />
        </svg>
        WinCCExplorer - ...
      </button>
      <button className="my-0.5 flex w-[160px] items-center gap-1 rounded-sm bg-[#1548b4] pl-2.5">
        <Icon name="compass" className="size-4 text-[#dde6f4]" />
        Graphics Designe...
      </button>
    </div>
    <div className="ml-auto flex items-center gap-2.5 pr-1.5">
      <button
        aria-label="帮助"
        className="size-3.5 border border-black bg-[#fbfbf2] text-center font-[Liberation_Sans,sans-serif] text-xs leading-3 font-bold text-black"
      >
        ?
      </button>
      <svg viewBox="0 0 10 16" className="h-4 w-2.5" fill="none" stroke="#fff" aria-hidden="true">
        <path d="M3 3V1h6v4H7M1 3h6v4H1z" />
        <path d="M2 12h6l-3 3z" fill="#fff" stroke="none" />
      </svg>
    </div>
    <div className="flex w-[87px] items-center border-l border-[#0e3a94] bg-linear-to-b from-[#1795ee] to-[#0f8ae6]">
      <button
        aria-label="显示隐藏的图标"
        className="flex size-[18px] items-center justify-center rounded-full bg-[#1c78d8]"
      >
        <svg viewBox="0 0 16 16" className="size-4" aria-hidden="true">
          <path d="M10 4L6 8l4 4" fill="none" stroke="#fff" strokeWidth="2" />
        </svg>
      </button>
      <svg viewBox="0 0 16 16" className="ml-0.5 size-4" aria-hidden="true">
        <path d="M8 1l6 2c0 7-1 10-6 12C3 13 2 10 2 3z" fill="#d02c30" stroke="#8f9bb5" />
        <path d="M6 5l4 5M10 5l-4 5" stroke="#fff" strokeWidth="2" />
      </svg>
      <time className="ml-1.5 font-[Liberation_Mono,monospace] text-[10px]">21:30</time>
    </div>
  </footer>
);

const Watermark = () => (
  <div className="pointer-events-none absolute bottom-[128px] left-8 w-[136px] text-center font-['Noto_Sans_CJK_SC',sans-serif] font-black whitespace-nowrap text-[#bdc1bb] [-webkit-text-stroke:5px_#6d716b] [paint-order:stroke_fill]">
    <div className="text-2xl leading-[29px]">录制工具</div>
    <div className="text-[28px] leading-8">KK 录像机</div>
  </div>
);

export default function App() {
  return (
    <div className="relative flex h-screen flex-col overflow-hidden border-r border-black bg-[#e9e7d8] font-['Liberation_Serif','Noto_Sans_CJK_SC',sans-serif] text-xs text-black select-none">
      <TitleBar />
      <MenuBar />
      <Toolbar />
      <FormatBar />
      <div className="flex min-h-0 flex-1 border-b border-[#b3b1a3]">
        <SidePanel />
        <Canvas />
        <aside className="w-[294px] shrink-0 border-t border-[#b3b1a3] pt-[3px]">
          <ObjectPalette />
          <div className="my-0.5 h-0.5 border-t border-[#b3b1a3] bg-white" />
          <DynamicWizard />
        </aside>
      </div>
      <LayerBar />
      <StatusBar />
      <Taskbar />
      <div className="h-1 shrink-0 bg-black" />
      <Watermark />
    </div>
  );
}
